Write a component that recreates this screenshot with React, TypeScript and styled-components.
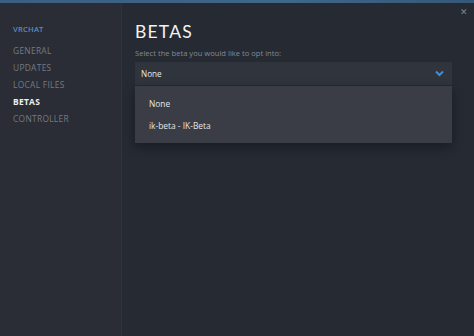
import styled, { createGlobalStyle } from "styled-components"

const Global = createGlobalStyle`
  html, body {
    margin: 0;
    padding: 0;
    background: #252a33;
  }
  body {
    font-family: "Open Sans", "Liberation Sans", sans-serif;
  }
`

const Page = styled.div`
  width: 474px;
  height: 336px;
  display: flex;
  flex-direction: column;
  overflow: hidden;
  background: #252a33;
`

const TopStrip = styled.div`
  height: 3px;
  flex: none;
  background: linear-gradient(90deg, #3b5f80, #3e6788 60%, #355878);
`

const Body = styled.div`
  flex: 1;
  display: flex;
`

const Sidebar = styled.nav`
  width: 122px;
  flex: none;
  background: #2a2d35;
  border-right: 1px solid #2e323a;
  padding: 20px 0 0 13px;
  box-sizing: border-box;
  display: flex;
  flex-direction: column;
`

const GameName = styled.div`
  color: #5a8cc2;
  font-size: 7.6px;
  font-weight: 600;
  letter-spacing: 0.2px;
  height: 19px;
  line-height: 13px;
`

const NavItem = styled.div<{ $active?: boolean }>`
  color: ${(p) => (p.$active ? "#eef0f3" : "#757a82")};
  font-weight: ${(p) => (p.$active ? 700 : 400)};
  font-size: 8.4px;
  letter-spacing: 0.3px;
  height: 17px;
  line-height: 17px;
`

const Main = styled.main`
  flex: 1;
  position: relative;
  padding: 18px 22px 0 13px;
  background: #252a33;
`

const Close = styled.div`
  position: absolute;
  top: 2px;
  right: 6px;
  color: #80858d;
  font-size: 9px;
`

const Title = styled.h1`
  margin: 0;
  font-family: "Lato", "Liberation Sans", sans-serif;
  font-weight: 400;
  font-size: 17.5px;
  letter-spacing: 1.2px;
  color: #f2f3f5;
  line-height: 22px;
`

const Hint = styled.div`
  color: #858a92;
  font-size: 7.6px;
  margin-top: 4px;
  line-height: 12px;
`

const Select = styled.div`
  margin-top: 3px;
  height: 23px;
  background: #30343c;
  display: flex;
  align-items: center;
  justify-content: space-between;
  padding: 0 8px 0 6px;
  color: #e6e8eb;
  font-size: 8.2px;
`

const Menu = styled.div`
  margin-top: 1px;
  background: #3a3d46;
  padding: 9px 0 4px 14px;
  box-shadow: 0 4px 10px rgba(0, 0, 0, 0.35);
  display: flex;
  flex-direction: column;
`

const Option = styled.div`
  color: #e3e5e8;
  font-size: 8.4px;
  height: 22px;
  line-height: 18px;
`

const Chevron = () => (
  <svg width="9" height="7" viewBox="0 0 9 7">
    <path d="M1 1.5 L4.5 5 L8 1.5" fill="none" stroke="#3f8fd8" strokeWidth="2" />
  </svg>
)

export default function App() {
  return (
    <>
      <Global />
      <Page>
        <TopStrip />
        <Body>
          <Sidebar>
            <GameName>VRCHAT</GameName>
            <NavItem>GENERAL</NavItem>
            <NavItem>UPDATES</NavItem>
            <NavItem>LOCAL FILES</NavItem>
            <NavItem $active>BETAS</NavItem>
            <NavItem>CONTROLLER</NavItem>
          </Sidebar>
          <Main>
            <Close>✕</Close>
            <Title>BETAS</Title>
            <Hint>Select the beta you would like to opt into:</Hint>
            <Select>
              <span>None</span>
              <Chevron />
            </Select>
            <Menu>
              <Option>None</Option>
              <Option>ik-beta - IK-Beta</Option>
            </Menu>
          </Main>
        </Body>
      </Page>
    </>
  )
}
